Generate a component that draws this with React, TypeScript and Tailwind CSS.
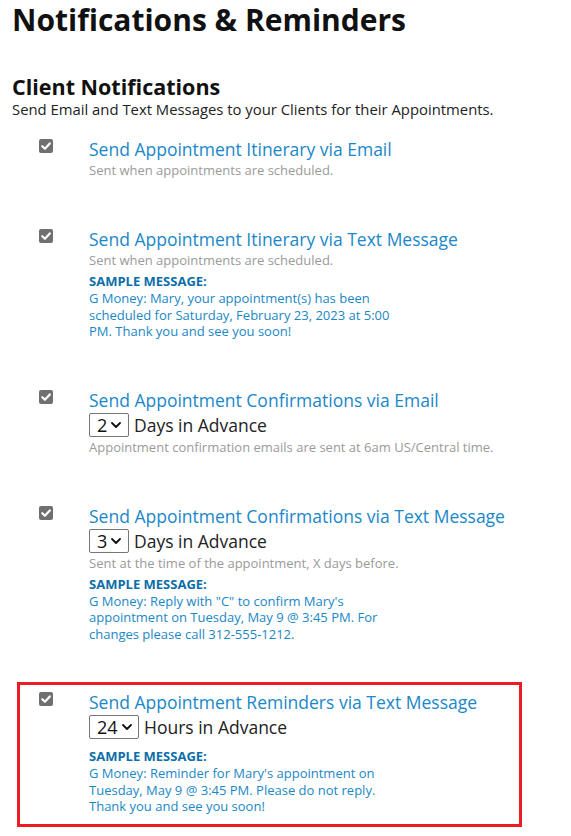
import type { ReactNode } from 'react';

const font = { fontFamily: '"Open Sans", "Liberation Sans", sans-serif' };

function CheckMark() {
  return (
    <div className="flex h-[14px] w-[14px] items-center justify-center rounded-[2px] bg-[#707070]">
      <svg viewBox="0 0 14 14" className="h-[14px] w-[14px]">
        <path d="M3.3 7.2 L5.9 9.8 L10.8 4.4" fill="none" stroke="#ffffff" strokeWidth="2.2" strokeLinecap="round" strokeLinejoin="round" />
      </svg>
    </div>
  );
}

function FakeSelect({ value, width }: { value: string; width: string }) {
  return (
    <div className={`flex h-[24px] ${width} items-center rounded-[2px] border border-[#767676] bg-white pl-[7px]`}>
      <span className="text-[18px] leading-[24px] text-[#111]">{value}</span>
      <svg viewBox="0 0 10 6" className="ml-[4px] h-[6px] w-[10px]">
        <path d="M1 1 L5 5 L9 1" fill="none" stroke="#111" strokeWidth="1.8" strokeLinecap="round" strokeLinejoin="round" />
      </svg>
    </div>
  );
}

function Sample({ lines, top }: { lines: string[]; top: string }) {
  return (
    <div className={top}>
      <div className="text-[13px] font-bold leading-[17px] text-[#0b6ea9]">SAMPLE MESSAGE:</div>
      {lines.map((line) => (
        <div key={line} className="text-[13px] leading-[16.5px] text-[#1a87c6]">
          {line}
        </div>
      ))}
    </div>
  );
}

function Item({
  title,
  children,
  highlighted = false,
}: {
  title: string;
  children?: ReactNode;
  highlighted?: boolean;
}) {
  return (
    <div
      className={`mb-[28px] flex w-[505px] border-[3px] pb-[9px] pl-[19px] pt-[5px] ${
        highlighted ? 'border-[#ec1c24]' : 'border-transparent'
      }`}
    >
      <div className="w-[50px] shrink-0 pt-[2px]">
        <CheckMark />
      </div>
      <div className="min-w-0 flex-1">
        <div className="text-[17.5px] leading-[24px] text-[#1a87c9]">{title}</div>
        {children}
      </div>
    </div>
  );
}

function Desc({ children }: { children: ReactNode }) {
  return <div className="text-[13px] leading-[18px] text-[#9a9a9a]">{children}</div>;
}

function Advance({ value, width, label }: { value: string; width: string; label: string }) {
  return (
    <div className="flex h-[26px] items-center gap-[5px]">
      <FakeSelect value={value} width={width} />
      <span className="text-[17.5px] leading-[24px] text-[#222]">{label}</span>
    </div>
  );
}

export default function App() {
  return (
    <div className="min-h-[836px] w-[571px] overflow-hidden bg-white" style={font}>
      <div className="pl-[12px] pt-[2px]">
        <h1 className="text-[30px] font-bold leading-[36px] text-[#111]">Notifications &amp; Reminders</h1>
        <h2 className="mt-[36px] text-[21.5px] font-bold leading-[25px] text-[#111]">Client Notifications</h2>
        <p className="text-[14.85px] leading-[20px] text-[#222]">
          Send Email and Text Messages to your Clients for their Appointments.
        </p>
      </div>

      <div className="ml-[17px] mt-[10px]">
        <Item title="Send Appointment Itinerary via Email">
          <Desc>Sent when appointments are scheduled.</Desc>
        </Item>

        <Item title="Send Appointment Itinerary via Text Message">
          <Desc>Sent when appointments are scheduled.</Desc>
          <Sample
            top="mt-[4px]"
            lines={[
              'G Money: Mary, your appointment(s) has been',
              'scheduled for Saturday, February 23, 2023 at 5:00',
              'PM. Thank you and see you soon!',
            ]}
          />
        </Item>

        <Item title="Send Appointment Confirmations via Email">
          <Advance value="2" width="w-[40px]" label="Days in Advance" />
          <Desc>Appointment confirmation emails are sent at 6am US/Central time.</Desc>
        </Item>

        <Item title="Send Appointment Confirmations via Text Message">
          <Advance value="3" width="w-[40px]" label="Days in Advance" />
          <Desc>Sent at the time of the appointment, X days before.</Desc>
          <Sample
            top="mt-[4px]"
            lines={[
              'G Money: Reply with "C" to confirm Mary\'s',
              'appointment on Tuesday, May 9 @ 3:45 PM. For',
              'changes please call 312-555-1212.',
            ]}
          />
        </Item>

        <Item title="Send Appointment Reminders via Text Message" highlighted>
          <Advance value="24" width="w-[50px]" label="Hours in Advance" />
          <Sample
            top="mt-[8px]"
            lines={[
              "G Money: Reminder for Mary's appointment on",
              'Tuesday, May 9 @ 3:45 PM. Please do not reply.',
              'Thank you and see you soon!',
            ]}
          />
        </Item>
      </div>
    </div>
  );
}
